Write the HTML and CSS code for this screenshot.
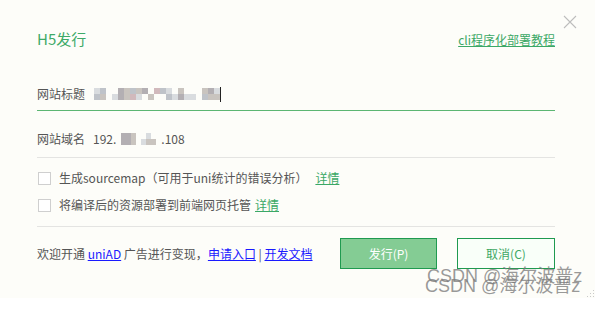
FILE: index.html
```html
<!DOCTYPE html>
<html lang="zh-CN">
<head>
<meta charset="utf-8">
<title>H5发行</title>
<link rel="stylesheet" href="styles.css">
</head>
<body>
<div class="dialog">
  <svg class="close" width="14" height="14" viewBox="0 0 14 14"><path d="M1 1L13 13M13 1L1 13" stroke="#bdbdbd" stroke-width="1.1" fill="none"/></svg>
  <div class="header">
    <div class="title">H5发行</div>
    <a class="glink" href="#">cli程序化部署教程</a>
  </div>
  <div class="field field-active">
    <span class="label">网站标题</span>
    <span class="mosaic mosaic-title">
      <span class="mrow"><i class="c1"></i><i class="c2"></i><i class="c0"></i><i class="c0"></i><i class="c3"></i><i class="c4"></i><i class="c2"></i><i class="c4"></i><i class="c3"></i><i class="c0"></i><i class="c5"></i><i class="c2"></i><i class="c1"></i><i class="c0"></i><i class="c4"></i><i class="c0"></i><i class="c0"></i><i class="c0"></i><i class="c4"></i><i class="c3"></i><i class="c1"></i></span>
      <span class="mrow"><i class="c2"></i><i class="c4"></i><i class="c0"></i><i class="c1"></i><i class="c3"></i><i class="c4"></i><i class="c5"></i><i class="c1"></i><i class="c0"></i><i class="c4"></i><i class="c0"></i><i class="c0"></i><i class="c2"></i><i class="c1"></i><i class="c3"></i><i class="c1"></i><i class="c1"></i><i class="c0"></i><i class="c2"></i><i class="c4"></i><i class="c4"></i></span>
    </span><span class="caret"></span>
  </div>
  <div class="field">
    <span class="label">网站域名</span>
    <span class="val">192.</span><span class="mosaic mosaic-domain">
      <span class="mrow"><i class="c0"></i><i class="c3"></i><i class="c3"></i><i class="c4"></i><i class="c0"></i><i class="c0"></i><i class="c1"></i><i class="c0"></i><i class="c0"></i></span>
      <span class="mrow"><i class="c0"></i><i class="c3"></i><i class="c3"></i><i class="c4"></i><i class="c0"></i><i class="c1"></i><i class="c4"></i><i class="c4"></i><i class="c0"></i></span>
    </span><span class="val">.108</span>
  </div>
  <div class="checks">
    <label class="check"><span class="box"></span><span>生成sourcemap（可用于uni统计的错误分析）</span><a class="glink detail" href="#">详情</a></label>
    <label class="check"><span class="box"></span><span>将编译后的资源部署到前端网页托管</span><a class="glink detail-near" href="#">详情</a></label>
  </div>
  <div class="footer">
    <div class="promo">欢迎开通 <a class="blink" href="#">uniAD</a> 广告进行变现，<a class="blink" href="#">申请入口</a> | <a class="blink" href="#">开发文档</a></div>
    <div class="buttons">
      <button class="btn btn-primary">发行(P)</button>
      <button class="btn btn-cancel">取消(C)</button>
    </div>
  </div>
  <div class="watermark"><span class="wm wm-a">CSDN @海尔波普z</span><span class="wm wm-b">CSDN @海尔波普z</span></div>
  <svg class="grip" width="10" height="10" viewBox="0 0 10 10"><g fill="#c9c9c9"><rect x="8" y="2" width="1" height="1"/><rect x="5" y="5" width="1" height="1"/><rect x="8" y="5" width="1" height="1"/><rect x="2" y="8" width="1" height="1"/><rect x="5" y="8" width="1" height="1"/><rect x="8" y="8" width="1" height="1"/></g></svg>
</div>
</body>
</html>
```

FILE: styles.css
```css
html, body {
  margin: 0;
  padding: 0;
  background: #ffffff;
}
body {
  font-family: "Noto Sans CJK SC", "Noto Sans", sans-serif;
  font-size: 12px;
  color: #555555;
}
.dialog {
  position: relative;
  height: 298px;
  box-sizing: border-box;
  padding: 0 40px 0 37px;
  background: #fdfdf9;
}
.close {
  position: absolute;
  left: 563px;
  top: 15px;
}
.header {
  display: flex;
  justify-content: space-between;
  align-items: baseline;
  padding-top: 28px;
  height: 50px;
  box-sizing: border-box;
}
.title {
  font-size: 15px;
  line-height: 22px;
  color: #3eaa68;
}
.glink {
  color: #3ba866;
  text-decoration: underline;
  line-height: 20px;
}
.field {
  display: flex;
  align-items: center;
  line-height: 20px;
  border-bottom: 1px solid #e4e4e2;
  padding: 18px 0 8px;
}
.field-active {
  margin-top: 28px;
  padding: 6px 0 6px;
  border-bottom-color: #5cb673;
}
.label {
  margin-right: 8px;
}
.val {
  color: #555555;
}
.mosaic {
  display: inline-flex;
  flex-direction: column;
}
.mosaic-title {
  margin-left: 1px;
}
.mrow {
  display: flex;
}
.mrow i {
  display: block;
  width: 6px;
  height: 6px;
}
.mosaic-domain .mrow i {
  width: 5px;
  height: 6px;
}
.c0 { background: transparent; }
.c1 { background: #d9dcdf; }
.c2 { background: #bfc3c9; }
.c3 { background: #b3afb3; }
.c4 { background: #c9c4bf; }
.c5 { background: #d1b9bc; }
.caret {
  display: inline-block;
  width: 1px;
  height: 15px;
  background: #222;
  margin-left: 0;
}
.checks {
  display: flex;
  flex-direction: column;
  gap: 7px;
  padding: 10px 0 11px;
  border-bottom: 1px solid #e4e4e2;
}
.check {
  display: flex;
  align-items: center;
  line-height: 20px;
}
.box {
  width: 11px;
  height: 11px;
  border: 1px solid #cfcfcf;
  background: #ffffff;
  margin: 0 8px 0 1px;
}
.detail {
  margin-left: 8px;
}
.detail-near {
  margin-left: 4px;
}
.footer {
  display: flex;
  align-items: center;
  justify-content: space-between;
  padding-top: 11px;
}
.promo {
  line-height: 20px;
}
.blink {
  color: #1a1aff;
  text-decoration: underline;
}
.buttons {
  display: flex;
  gap: 20px;
}
.btn {
  height: 31px;
  width: 98px;
  box-sizing: border-box;
  border: 1px solid #1f9a50;
  font-family: "Noto Sans CJK SC", "Noto Sans", sans-serif;
  font-size: 12px;
  padding: 0;
}
.btn-primary {
  background: #84cc94;
  color: #ffffff;
  width: 97px;
}
.btn-cancel {
  background: #f9fff9;
  color: #3ea864;
}
.watermark {
  position: absolute;
  left: 424px;
  top: 265px;
  width: 171px;
  height: 33px;
  overflow: hidden;
}
.wm {
  position: absolute;
  left: 3px;
  font-family: "Liberation Sans", "Noto Sans CJK SC", sans-serif;
  font-size: 18px;
  line-height: 21px;
  color: rgba(120, 120, 120, 0.75);
  white-space: nowrap;
}
.wm-a { top: 1px; }
.wm-b { top: 11px; left: 1px; }
.grip {
  position: absolute;
  right: 0;
  bottom: 0;
}
```
